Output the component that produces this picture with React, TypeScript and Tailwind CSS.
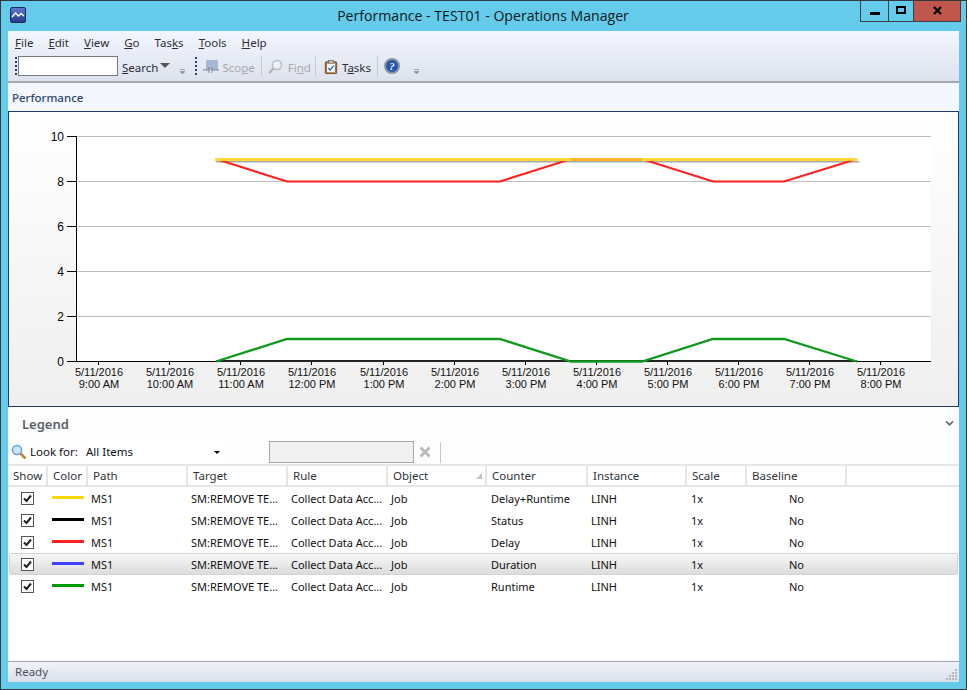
const ui = "font-['Noto_Sans','Open_Sans',sans-serif]";

const menus = [
  ["F", "ile"],
  ["E", "dit"],
  ["V", "iew"],
  ["G", "o"],
  ["Tas", "ks"],
  ["T", "ools"],
  ["H", "elp"],
];

const columns = [
  { name: "Show", w: "w-[40px]" },
  { name: "Color", w: "w-[40px]" },
  { name: "Path", w: "w-[100px]" },
  { name: "Target", w: "w-[100px]" },
  { name: "Rule", w: "w-[100px]" },
  { name: "Object", w: "w-[99px]" },
  { name: "Counter", w: "w-[101px]" },
  { name: "Instance", w: "w-[99px]" },
  { name: "Scale", w: "w-[60px]" },
  { name: "Baseline", w: "w-[100px]" },
];

const rows = [
  { color: "bg-[#ffd800]", counter: "Delay+Runtime" },
  { color: "bg-[#000000]", counter: "Status" },
  { color: "bg-[#ff2020]", counter: "Delay" },
  { color: "bg-[#4040ff]", counter: "Duration", selected: true },
  { color: "bg-[#009900]", counter: "Runtime" },
];

const ticks = [
  ["9:00 AM", 99],
  ["10:00 AM", 170],
  ["11:00 AM", 241],
  ["12:00 PM", 312],
  ["1:00 PM", 384],
  ["2:00 PM", 455],
  ["3:00 PM", 526],
  ["4:00 PM", 597],
  ["5:00 PM", 668],
  ["6:00 PM", 739],
  ["7:00 PM", 810],
  ["8:00 PM", 881],
] as const;

const px = [216, 287, 358, 429, 500, 571, 642, 713, 784, 857];
const yOf = (v: number) => 361 - v * 22.5;
const line = (vals: number[]) => vals.map((v, i) => `${px[i]},${yOf(v) + 0.5}`).join(" ");

function Chart() {
  // svg coordinates are shifted so they read like page coordinates
  return (
    <svg viewBox="9 112 949 294" className="block w-[949px] h-[294px]">
      <defs>
        <linearGradient id="panel" x1="0" y1="0" x2="0" y2="1">
          <stop offset="0" stopColor="#ffffff" />
          <stop offset="1" stopColor="#efefef" />
        </linearGradient>
      </defs>
      <rect x="9" y="112" width="949" height="294" fill="url(#panel)" />
      <rect x="77" y="136" width="854" height="225" fill="#ffffff" />
      {[10, 8, 6, 4, 2].map((v) => (
        <line key={v} x1="77" x2="931" y1={yOf(v) + 0.5} y2={yOf(v) + 0.5} stroke="#bdbdbd" />
      ))}
      {[10, 8, 6, 4, 2, 0].map((v) => (
        <g key={v}>
          <line x1="67" x2="77" y1={yOf(v) + 0.5} y2={yOf(v) + 0.5} stroke="#000" />
          <text x="64" y={yOf(v) + 5} textAnchor="end" fontSize="12" fontFamily="Liberation Sans" fill="#000">
            {v}
          </text>
        </g>
      ))}
      <line x1="76.5" x2="76.5" y1="136" y2="361.5" stroke="#000" />
      <line x1="67" x2="931" y1="361.5" y2="361.5" stroke="#000" />
      {ticks.map(([t, x]) => (
        <g key={t}>
          <line x1={x - 0.5} x2={x - 0.5} y1="361" y2="365" stroke="#000" />
          <text textAnchor="middle" fontSize="11" fontFamily="Liberation Sans" fill="#111">
            <tspan x={x} y="376">5/11/2016</tspan>
            <tspan x={x} y="388">{t}</tspan>
          </text>
        </g>
      ))}
      <line x1="216" x2="859" y1="161.7" y2="161.7" stroke="#a9a9a9" strokeWidth="1.5" />
      <line x1="216" x2="857" y1="361" y2="361" stroke="#222" strokeWidth="2" />
      <polyline points={line([0, 1, 1, 1, 1, 0, 0, 1, 1, 0])} fill="none" stroke="#0f9a1f" strokeWidth="2.3" />
      <polyline points={line([9, 8, 8, 8, 8, 9, 9, 8, 8, 9])} fill="none" stroke="#ff2020" strokeWidth="2.2" />
      <line x1="215" x2="857" y1="159.5" y2="159.5" stroke="#ffd83a" strokeWidth="3" />
      <line x1="571" x2="642" y1="159.5" y2="159.5" stroke="#ffb52e" strokeWidth="3" />
    </svg>
  );
}

function Check() {
  return (
    <span className="flex items-center justify-center w-[13px] h-[13px] border border-[#555] bg-white">
      <svg viewBox="0 0 11 11" className="w-[11px] h-[11px]">
        <path d="M2 5.5 L4.5 8 L9 2.5" fill="none" stroke="#222" strokeWidth="2" />
      </svg>
    </span>
  );
}

function Grip() {
  return (
    <span className="flex flex-col gap-[2px] w-[2px] -mt-[2px]">
      {[0, 1, 2, 3, 4].map((i) => (
        <span key={i} className="w-[2px] h-[2px] bg-[#2b3f70]" />
      ))}
    </span>
  );
}

function Overflow() {
  return (
    <svg viewBox="0 0 7 7" className="w-[7px] h-[7px] mt-[8px]">
      <path d="M1 1.5 H6 M1 3.5 H6 L3.5 6 Z" fill="#8c95a8" stroke="#8c95a8" strokeWidth="0.8" />
    </svg>
  );
}

function Sep() {
  return <span className="block w-px h-[20px] bg-[#c4c9d2] -mt-[2px]" />;
}

export default function App() {
  return (
    <div className={`${ui} w-[967px] h-[690px] flex flex-col bg-[#65cbeb] border border-[#33383c] text-[11.5px] leading-none text-[#111] overflow-hidden`}>
      {/* title bar */}
      <div className="relative h-[30px] shrink-0 flex items-center justify-center">
        <span className="absolute left-[9px] top-[6px] w-[16px] h-[16px] rounded-[2px] bg-gradient-to-b from-[#5a7bc8] to-[#2a3a8a] border border-[#1d2a66] flex items-center justify-center">
          <svg viewBox="0 0 14 14" className="w-[14px] h-[14px]">
            <path d="M1 9 L4.5 5 L7.5 8 L10 5.5 L13 8" fill="none" stroke="#fff" strokeWidth="1.4" />
          </svg>
        </span>
        <span className="text-[14.1px] text-[#0c1a20] font-['Open_Sans',sans-serif] ml-[-1px]">
          Performance - TEST01 - Operations Manager
        </span>
        <div className="absolute right-[5px] top-0 flex h-[21px] border-x border-b border-[#3c4044]">
          <div className="w-[28px] flex items-center justify-center border-r border-[#3c4044]">
            <span className="w-[10px] h-[3px] bg-black mt-[5px]" />
          </div>
          <div className="w-[25px] flex items-center justify-center border-r border-[#3c4044]">
            <span className="w-[10px] h-[8px] border-[2px] border-black -mt-[2px]" />
          </div>
          <div className="w-[46px] flex items-center justify-center bg-[#c0574d]">
            <svg viewBox="0 0 9 9" className="w-[9px] h-[9px] -mt-[1px]">
              <path d="M1 1 L8 8 M8 1 L1 8" stroke="#000" strokeWidth="2.2" />
            </svg>
          </div>
        </div>
      </div>

      {/* client area */}
      <div className="mx-[7px] mb-[7px] flex-1 flex flex-col min-h-0 bg-white">
        {/* menu and toolbar */}
        <div className="h-[52px] shrink-0 bg-gradient-to-b from-[#f3f6fe] to-[#dde2ec] border-b-2 border-[#a4a8ae]">
          <div className="h-[24px] flex items-end pb-[7px] pl-[7px] gap-[15px] text-[#2a2f38]">
            {menus.map(([a, b], i) => (
              <span key={a + b}>
                {i === 4 ? (
                  <>
                    Tas<u>k</u>s
                  </>
                ) : (
                  <>
                    <u>{a}</u>
                    {b}
                  </>
                )}
              </span>
            ))}
          </div>
          <div className="h-[24px] flex items-center pl-[7px]">
            <Grip />
            <span className="ml-[1px] w-[100px] h-[20px] -mt-[2px] bg-white border border-[#767a80]" />
            <span className="ml-[4px] mt-[1px] text-[#2a2f38]">
              <u>S</u>earch
            </span>
            <span className="ml-[2px] -mt-[4px] w-0 h-0 border-x-[5px] border-x-transparent border-t-[5px] border-t-[#555]" />
            <span className="ml-[9px]">
              <Overflow />
            </span>
            <span className="ml-[9px]">
              <Grip />
            </span>
            <svg viewBox="0 0 16 16" className="ml-[6px] w-[16px] h-[16px]">
              <rect x="3" y="1" width="12" height="10" fill="#a9b7d6" />
              <path d="M0 11 H6 M9 11 H16 M6 8 V14 M9 8 V14" stroke="#7d838e" strokeWidth="1" fill="none" />
            </svg>
            <span className="ml-[3px] mt-[1px] text-[#a6a9ae]">
              Sco<u>p</u>e
            </span>
            <span className="ml-[6px]">
              <Sep />
            </span>
            <svg viewBox="0 0 16 16" className="ml-[5px] w-[16px] h-[16px]">
              <circle cx="10" cy="6" r="4.5" fill="#eef2f8" stroke="#b5bbc6" strokeWidth="1.4" />
              <path d="M6.5 9.5 L2 14" stroke="#b9b5a8" strokeWidth="2.4" />
            </svg>
            <span className="ml-[5px] mt-[1px] text-[#a6a9ae]">
              Fi<u>n</u>d
            </span>
            <span className="ml-[4px]">
              <Sep />
            </span>
            <svg viewBox="0 0 16 16" className="ml-[8px] w-[14px] h-[16px]">
              <rect x="1.5" y="2" width="13" height="13.5" rx="1" fill="#a9733c" stroke="#6e4a22" />
              <rect x="3.5" y="4" width="9" height="10" fill="#f6f8fc" />
              <rect x="5" y="0.5" width="6" height="3" fill="#c9ccd2" stroke="#555" strokeWidth="0.7" />
              <path d="M5 9 L7 11.5 L11 6.5" fill="none" stroke="#1f6fd0" strokeWidth="1.6" />
            </svg>
            <span className="ml-[4px] mt-[1px] text-[#2a2f38]">
              T<u>a</u>sks
            </span>
            <span className="ml-[6px]">
              <Sep />
            </span>
            <span className="ml-[6px] -mt-[2px] w-[16px] h-[16px] rounded-full bg-[#2456a8] border-2 border-[#8a94a6] flex items-center justify-center text-white text-[11px] font-bold font-['Liberation_Serif',serif] italic">
              ?
            </span>
            <span className="ml-[13px]">
              <Overflow />
            </span>
          </div>
        </div>

        {/* performance header */}
        <div className="h-[28px] shrink-0 flex items-center pl-[4px] pt-[2px] bg-[#f4f7fd] text-[#30466f] text-[11.5px] font-medium">
          Performance
        </div>

        {/* chart */}
        <div className="h-[296px] shrink-0 border border-[#1b3a6f] bg-white">
          <Chart />
        </div>

        {/* legend */}
        <div className="flex-1 min-h-0 flex flex-col bg-[#fdfdfd]">
          <div className="h-[33px] shrink-0 flex items-center justify-between pl-[14px] pr-[5px]">
            <span className="text-[13px] font-semibold text-[#5a6068] mt-[1px]">Legend</span>
            <svg viewBox="0 0 10 8" className="w-[9px] h-[7px]">
              <path d="M1 1.5 L5 5.5 L9 1.5" fill="none" stroke="#666" strokeWidth="2" />
            </svg>
          </div>
          <div className="h-[24px] shrink-0 flex items-center">
            <svg viewBox="0 0 16 16" className="ml-[3px] w-[16px] h-[16px]">
              <circle cx="6" cy="6" r="4.6" fill="#cfe6fb" stroke="#5fa6dd" strokeWidth="1.5" />
              <path d="M9.5 9.5 L14.5 14.5" stroke="#c08a3e" strokeWidth="2.6" />
            </svg>
            <span className="ml-[3px] w-[46px] shrink-0 whitespace-nowrap">Look for:</span>
            <div className="ml-[5px] w-[145px] h-[22px] flex items-center justify-between bg-white pl-[5px] pr-[6px]">
              <span>All Items</span>
              <span className="w-0 h-0 border-x-[3px] border-x-transparent border-t-[3px] border-t-black" />
            </div>
            <span className="ml-[43px] w-[145px] h-[22px] bg-[#f0f0f0] border border-[#a6a6a6]" />
            <svg viewBox="0 0 12 12" className="ml-[5px] w-[12px] h-[12px]">
              <path d="M1.5 1.5 L10.5 10.5 M10.5 1.5 L1.5 10.5" stroke="#b9b9b9" strokeWidth="2.8" />
            </svg>
            <span className="ml-[9px] w-px h-[21px] bg-[#c8c8c8]" />
          </div>

          {/* list */}
          <div className="flex-1 min-h-0 bg-white">
            <div className="h-[23px] flex border-y-2 border-[#e6e6e6] bg-white text-[#2f3338]">
              {columns.map((c) => (
                <div key={c.name} className={`${c.w} shrink-0 relative flex items-center pl-[5px] border-r-2 border-[#e6e6e6]`}>
                  {c.name}
                  {c.name === "Object" && (
                    <span className="absolute right-[3px] top-[7px] w-0 h-0 border-l-[6px] border-l-transparent border-b-[6px] border-b-[#c4c4c4]" />
                  )}
                </div>
              ))}
            </div>
            {rows.map((r) => (
              <div
                key={r.counter}
                className={`h-[22px] flex items-center text-[11px] ${
                  r.selected ? "bg-gradient-to-b from-[#f7f7f7] to-[#dcdcdc] border border-[#d4d4d4] rounded-[2px] mx-px" : ""
                }`}
              >
                <div className={`${r.selected ? "w-[38px] pl-[11px]" : "w-[40px] pl-[13px]"} shrink-0`}>
                  <Check />
                </div>
                <div className="w-[40px] shrink-0 pl-[4px]">
                  <span className={`block w-[32px] h-[3px] -mt-[2px] ${r.color}`} />
                </div>
                <span className="w-[100px] shrink-0 pl-[3px]">MS1</span>
                <span className="w-[100px] shrink-0 pl-[3px]">SM:REMOVE TE...</span>
                <span className="w-[100px] shrink-0 pl-[3px]">Collect Data Acc...</span>
                <span className="w-[100px] shrink-0 pl-[3px]">Job</span>
                <span className="w-[100px] shrink-0 pl-[3px]">{r.counter}</span>
                <span className="w-[100px] shrink-0 pl-[3px]">LINH</span>
                <span className="w-[60px] shrink-0 pl-[3px]">1x</span>
                <span className="w-[100px] shrink-0 pl-[41px]">No</span>
              </div>
            ))}
          </div>
        </div>

        {/* status bar */}
        <div className="relative h-[21px] shrink-0 flex items-center pl-[7px] bg-gradient-to-b from-[#f0f3f9] to-[#dadfe9] border-t border-[#a0a4aa] text-[#4c5258]">
          Ready
          <span className="absolute right-[2px] bottom-[2px] grid grid-cols-4 gap-px">
            {[0, 0, 0, 1, 0, 0, 1, 1, 0, 1, 1, 1, 1, 1, 1, 1].map((on, i) => (
              <span key={i} className={`w-[2px] h-[2px] ${on ? "bg-[#b5b8bd]" : ""}`} />
            ))}
          </span>
        </div>
      </div>
    </div>
  );
}
